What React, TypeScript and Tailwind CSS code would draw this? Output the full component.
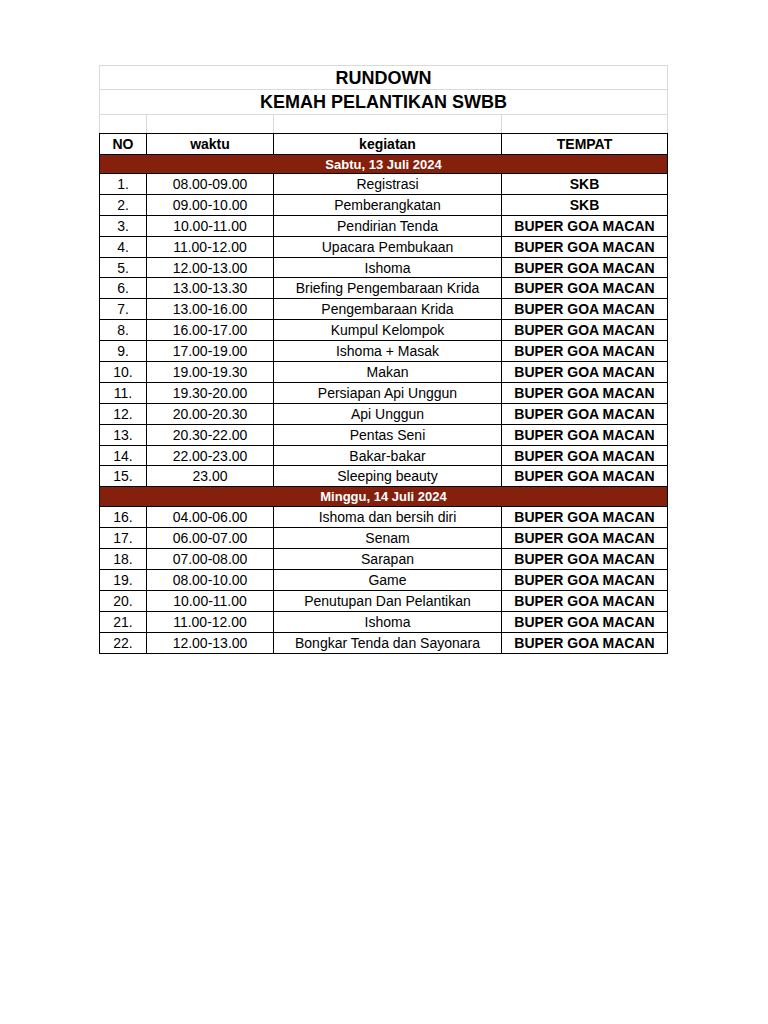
const sabtu: [string, string, string][] = [
  ['08.00-09.00', 'Registrasi', 'SKB'],
  ['09.00-10.00', 'Pemberangkatan', 'SKB'],
  ['10.00-11.00', 'Pendirian Tenda', 'BUPER GOA MACAN'],
  ['11.00-12.00', 'Upacara Pembukaan', 'BUPER GOA MACAN'],
  ['12.00-13.00', 'Ishoma', 'BUPER GOA MACAN'],
  ['13.00-13.30', 'Briefing Pengembaraan Krida', 'BUPER GOA MACAN'],
  ['13.00-16.00', 'Pengembaraan Krida', 'BUPER GOA MACAN'],
  ['16.00-17.00', 'Kumpul Kelompok', 'BUPER GOA MACAN'],
  ['17.00-19.00', 'Ishoma + Masak', 'BUPER GOA MACAN'],
  ['19.00-19.30', 'Makan', 'BUPER GOA MACAN'],
  ['19.30-20.00', 'Persiapan Api Unggun', 'BUPER GOA MACAN'],
  ['20.00-20.30', 'Api Unggun', 'BUPER GOA MACAN'],
  ['20.30-22.00', 'Pentas Seni', 'BUPER GOA MACAN'],
  ['22.00-23.00', 'Bakar-bakar', 'BUPER GOA MACAN'],
  ['23.00', 'Sleeping beauty', 'BUPER GOA MACAN'],
];

const minggu: [string, string, string][] = [
  ['04.00-06.00', 'Ishoma dan bersih diri', 'BUPER GOA MACAN'],
  ['06.00-07.00', 'Senam', 'BUPER GOA MACAN'],
  ['07.00-08.00', 'Sarapan', 'BUPER GOA MACAN'],
  ['08.00-10.00', 'Game', 'BUPER GOA MACAN'],
  ['10.00-11.00', 'Penutupan Dan Pelantikan', 'BUPER GOA MACAN'],
  ['11.00-12.00', 'Ishoma', 'BUPER GOA MACAN'],
  ['12.00-13.00', 'Bongkar Tenda dan Sayonara', 'BUPER GOA MACAN'],
];

const cell = 'border border-black p-0 text-center align-middle';

function Row({ no, item }: { no: number; item: [string, string, string] }) {
  return (
    <tr className="h-[20.9px]">
      <td className={cell}>{no}.</td>
      <td className={cell}>{item[0]}</td>
      <td className={cell}>{item[1]}</td>
      <td className={`${cell} font-bold`}>{item[2]}</td>
    </tr>
  );
}

function DayRow({ label, tall }: { label: string; tall?: boolean }) {
  return (
    <tr className={tall ? 'h-[20px]' : 'h-[19px]'}>
      <td colSpan={4} className="border border-black bg-[#85200c] p-0 text-center align-middle text-[13px] font-bold text-white">
        {label}
      </td>
    </tr>
  );
}

export default function App() {
  return (
    <div className="min-h-[1024px] w-[768px] bg-white pt-[65px] pl-[99px] font-['Liberation_Sans',Arial,sans-serif] text-[14px] leading-none text-black">
      <table className="table-fixed border-collapse">
        <colgroup>
          <col className="w-[47px]" />
          <col className="w-[127px]" />
          <col className="w-[228px]" />
          <col className="w-[166px]" />
        </colgroup>
        <tbody>
          <tr className="h-[24px]">
            <td colSpan={4} className="border border-[#dadada] p-0 text-center align-middle text-[18px] font-bold">
              RUNDOWN
            </td>
          </tr>
          <tr className="h-[25px]">
            <td colSpan={4} className="border border-[#dadada] p-0 text-center align-middle text-[18px] font-bold">
              KEMAH PELANTIKAN SWBB
            </td>
          </tr>
          <tr className="h-[19px]">
            <td className="border border-[#dadada] border-b-black p-0" />
            <td className="border border-[#dadada] border-b-black p-0" />
            <td className="border border-[#dadada] border-b-black p-0" />
            <td className="border border-[#dadada] border-b-black p-0" />
          </tr>
          <tr className="h-[21px] font-bold">
            <td className={cell}>NO</td>
            <td className={cell}>waktu</td>
            <td className={cell}>kegiatan</td>
            <td className={cell}>TEMPAT</td>
          </tr>
          <DayRow label="Sabtu, 13 Juli 2024" />
          {sabtu.map((item, i) => (
            <Row key={i} no={i + 1} item={item} />
          ))}
          <DayRow label="Minggu, 14 Juli 2024" tall />
          {minggu.map((item, i) => (
            <Row key={i} no={i + 16} item={item} />
          ))}
        </tbody>
      </table>
    </div>
  );
}
